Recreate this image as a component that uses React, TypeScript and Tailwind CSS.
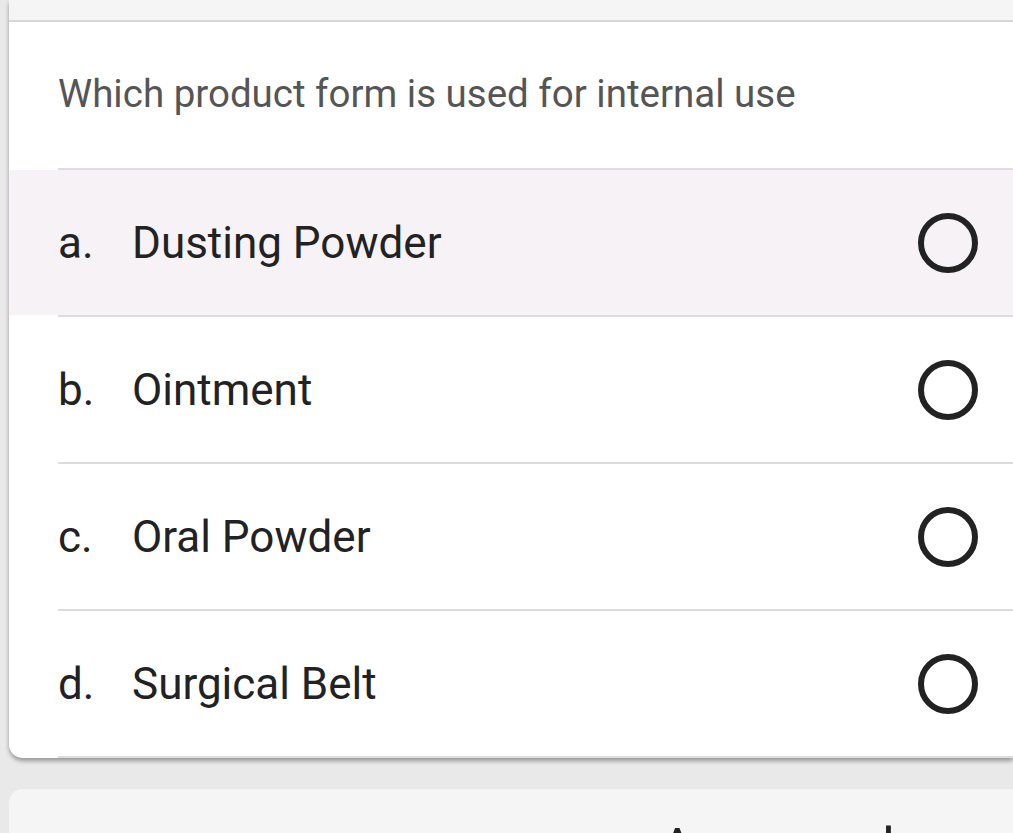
const options = [
  { key: "a.", label: "Dusting Powder", active: true },
  { key: "b.", label: "Ointment", active: false },
  { key: "c.", label: "Oral Powder", active: false },
  { key: "d.", label: "Surgical Belt", active: false },
];

function Radio() {
  return (
    <svg width="62" height="62" viewBox="0 0 62 62" className="shrink-0">
      <circle cx="31" cy="31" r="27" fill="none" stroke="#222222" strokeWidth="6" />
    </svg>
  );
}

export default function App() {
  return (
    <div
      className="h-[833px] w-[1013px] overflow-hidden bg-[#e9e9e9] pl-[9px]"
      style={{ fontFamily: "Roboto, 'Liberation Sans', sans-serif" }}
    >
      <div className="overflow-hidden rounded-bl-[14px] bg-white shadow-[0_3px_4px_rgba(0,0,0,0.35)]">
        <div className="h-[22px] border-b-[2px] border-[#d7d7d7] bg-[#f5f5f5]" />
        <div className="flex h-[146px] items-center pl-[49px] text-[38.5px] text-[#555555]">
          <span className="-mt-[2px]">Which product form is used for internal use</span>
        </div>
        {options.map((o) => (
          <div key={o.key}>
            <div className="ml-[49px] h-[2px] bg-[#dcdcdc]" />
            <div
              className={
                "flex h-[145px] items-center pl-[49px] pr-[34px] " +
                (o.active ? "bg-[#f6f2f5]" : "bg-white")
              }
            >
              <span className="w-[74px] text-[44px] text-[#222222]">{o.key}</span>
              <span className="flex-1 text-[44px] text-[#222222]">{o.label}</span>
              <Radio />
            </div>
          </div>
        ))}
        <div className="ml-[49px] h-[2px] bg-[#dcdcdc]" />
      </div>
      <div className="mt-[31px] h-[80px] rounded-tl-[14px] bg-[#f5f5f5] pl-[651px] pt-[33px]">
        <span className="text-[53px] leading-[53px] text-[#222222]">Answered</span>
      </div>
    </div>
  );
}
